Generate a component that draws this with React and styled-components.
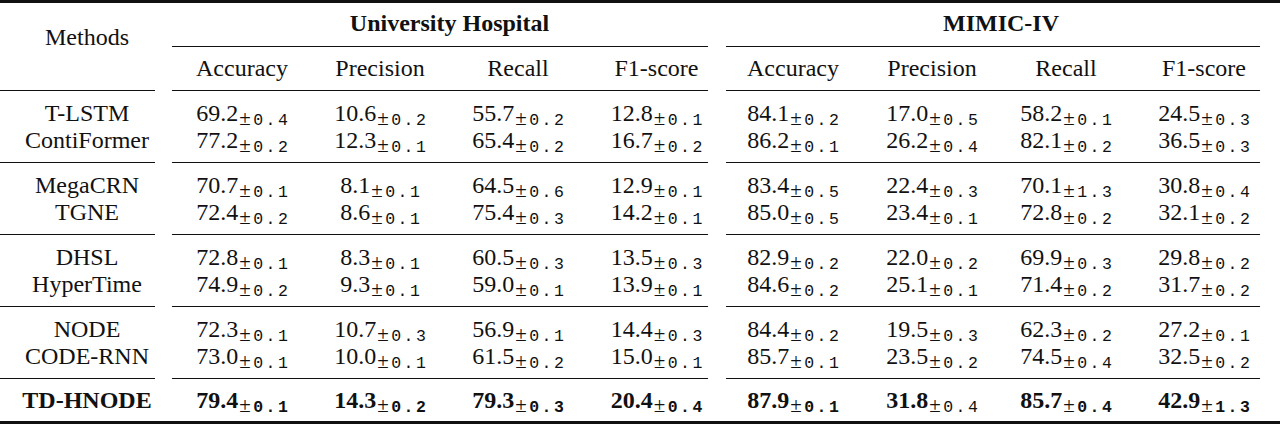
import React from 'react';
import styled, { createGlobalStyle } from 'styled-components';

const GlobalStyle = createGlobalStyle`
  html, body {
    margin: 0;
    padding: 0;
    background: #fff;
  }
  body {
    font-family: "Liberation Serif", "Times New Roman", serif;
    color: #111;
  }
`;

// column widths picked so cell centres land where the paper put them
const COLUMNS = '164px 156px 120px 156px 121px 152px 126px 142px 134px';

const Table = styled.div`
  width: 1280px;
  border-top: 3px solid #111;
  border-bottom: 3px solid #111;
  font-size: 24px;
  line-height: 27px;
`;

const Grid = styled.div`
  display: grid;
  grid-template-columns: ${COLUMNS};
  padding: ${({ $pad }) => $pad || '0'};
`;

const MethodsHead = styled.div`
  grid-column: 1;
  grid-row: 1 / span 3;
  align-self: start;
  padding: 21px 0 0 10px;
  text-align: center;
`;

const GroupTitle = styled.div`
  grid-column: ${({ $cols }) => $cols};
  grid-row: 1;
  padding: 7px 0 9px ${({ $shift }) => $shift}px;
  text-align: center;
  font-weight: bold;
`;

const Rule = styled.div`
  grid-column: ${({ $cols }) => $cols};
  grid-row: ${({ $row }) => $row || 'auto'};
  height: 1px;
  background: #111;
  margin: ${({ $l, $r }) => `0 ${$r}px 0 ${$l}px`};
`;

const SubHead = styled.div`
  grid-row: 3;
  grid-column: ${({ $col }) => $col};
  padding: 8px 0;
  text-align: center;
`;

const Method = styled.div`
  grid-column: 1;
  padding-left: 10px;
  text-align: center;
  font-weight: ${({ $bold }) => ($bold ? 'bold' : 'normal')};
`;

const Cell = styled.div`
  text-align: center;
  white-space: nowrap;
  font-weight: ${({ $bold }) => ($bold ? 'bold' : 'normal')};
`;

const Pm = styled.span`
  font-family: "Liberation Mono", "DejaVu Sans Mono", monospace;
  font-size: 16.5px;
  line-height: 0;
  letter-spacing: 2.5px;
  vertical-align: -4px;
  margin: 0 -2.5px 0 1px;
  font-weight: ${({ $bold }) => ($bold ? 'bold' : 'normal')};
`;

const Sign = styled.span`
  font-family: "Liberation Serif", serif;
  font-size: 21px;
  font-weight: normal;
`;

const metrics = ['Accuracy', 'Precision', 'Recall', 'F1-score'];

const groups = [
  [
    ['T-LSTM', '69.2 0.4', '10.6 0.2', '55.7 0.2', '12.8 0.1', '84.1 0.2', '17.0 0.5', '58.2 0.1', '24.5 0.3'],
    ['ContiFormer', '77.2 0.2', '12.3 0.1', '65.4 0.2', '16.7 0.2', '86.2 0.1', '26.2 0.4', '82.1 0.2', '36.5 0.3'],
  ],
  [
    ['MegaCRN', '70.7 0.1', '8.1 0.1', '64.5 0.6', '12.9 0.1', '83.4 0.5', '22.4 0.3', '70.1 1.3', '30.8 0.4'],
    ['TGNE', '72.4 0.2', '8.6 0.1', '75.4 0.3', '14.2 0.1', '85.0 0.5', '23.4 0.1', '72.8 0.2', '32.1 0.2'],
  ],
  [
    ['DHSL', '72.8 0.1', '8.3 0.1', '60.5 0.3', '13.5 0.3', '82.9 0.2', '22.0 0.2', '69.9 0.3', '29.8 0.2'],
    ['HyperTime', '74.9 0.2', '9.3 0.1', '59.0 0.1', '13.9 0.1', '84.6 0.2', '25.1 0.1', '71.4 0.2', '31.7 0.2'],
  ],
  [
    ['NODE', '72.3 0.1', '10.7 0.3', '56.9 0.1', '14.4 0.3', '84.4 0.2', '19.5 0.3', '62.3 0.2', '27.2 0.1'],
    ['CODE-RNN', '73.0 0.1', '10.0 0.1', '61.5 0.2', '15.0 0.1', '85.7 0.1', '23.5 0.2', '74.5 0.4', '32.5 0.2'],
  ],
];

// ours: everything bold, the std of 31.8 stays plain
const ours = ['TD-HNODE', '79.4 0.1', '14.3 0.2', '79.3 0.3', '20.4 0.4', '87.9 0.1', '31.8 0.4', '85.7 0.4', '42.9 1.3'];
const plainStd = [6];

const Value = ({ v, bold, boldStd }) => {
  const [mean, std] = v.split(' ');
  return (
    <Cell $bold={bold}>
      {mean}
      <Pm $bold={boldStd}>
        <Sign>±</Sign>
        {std}
      </Pm>
    </Cell>
  );
};

const Separator = () => (
  <Grid>
    <Rule $cols="1" $l={0} $r={9} />
    <Rule $cols="2 / span 4" $l={8} $r={9} />
    <Rule $cols="6 / span 4" $l={9} $r={11} />
  </Grid>
);

const Row = ({ row, bold }) => (
  <>
    <Method $bold={bold}>{row[0]}</Method>
    {row.slice(1).map((v, i) => (
      <Value key={i} v={v} bold={bold} boldStd={bold && !plainStd.includes(i + 1)} />
    ))}
  </>
);

const App = () => (
  <>
    <GlobalStyle />
    <Table>
      <Grid>
        <MethodsHead>Methods</MethodsHead>
        <GroupTitle $cols="2 / span 4" $shift={18}>University Hospital</GroupTitle>
        <GroupTitle $cols="6 / span 4" $shift={14}>MIMIC-IV</GroupTitle>
        <Rule $cols="2 / span 4" $row={2} $l={8} $r={9} />
        <Rule $cols="6 / span 4" $row={2} $l={9} $r={11} />
        {[...metrics, ...metrics].map((m, i) => (
          <SubHead key={i} $col={i + 2}>{m}</SubHead>
        ))}
      </Grid>
      {groups.map((g, gi) => (
        <React.Fragment key={gi}>
          <Separator />
          <Grid $pad="9px 0 8px">
            {g.map((row) => (
              <Row key={row[0]} row={row} />
            ))}
          </Grid>
        </React.Fragment>
      ))}
      <Separator />
      <Grid $pad="8px 0 7px">
        <Row row={ours} bold />
      </Grid>
    </Table>
  </>
);

export default App;
